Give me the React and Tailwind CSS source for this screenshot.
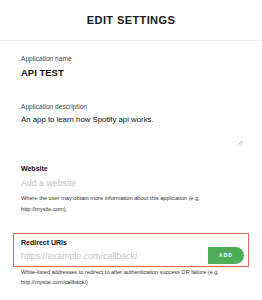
import React from 'react';

const font = { fontFamily: '"Liberation Sans", Arial, sans-serif' };

const App = () => {
    return (
        <div className="w-[262px] h-[300px] bg-white overflow-hidden text-[#222]" style={font}>
            <div className="h-[41px] flex items-center justify-center border-b border-[#ececec]">
                <h1 className="text-[11px] font-bold tracking-[0.4px] text-[#1a1a1a]">EDIT SETTINGS</h1>
            </div>

            <div className="px-[21px]">
                <p className="mt-[13px] text-[6.6px] leading-[10px] text-[#444]">Application name</p>
                <p className="mt-[3px] text-[9.5px] leading-[12px] font-bold text-[#111]">API TEST</p>

                <p className="mt-[23px] text-[6.6px] leading-[10px] text-[#444]">Application description</p>
                <div className="relative mt-[2px] h-[34px]">
                    <p className="text-[7.8px] leading-[12px] text-[#111]">An app to learn how Spotify api works.</p>
                    <svg className="absolute right-[-2px] top-[26px]" width="5" height="5" viewBox="0 0 5 5">
                        <path d="M4.5 0.5 L0.5 4.5 M4.5 2.5 L2.5 4.5" stroke="#999" strokeWidth="0.7" />
                    </svg>
                </div>

                <p className="mt-[16px] text-[7px] leading-[10px] font-bold text-[#111]">Website</p>
                <p className="mt-[2px] text-[8.8px] leading-[14px] text-[#c4c4c4]">Add a website</p>
                <p className="mt-[3px] text-[5.65px] leading-[11px] text-[#333]">
                    Where the user may obtain more information about this application (e.g.
                    <br />
                    http://mysite.com).
                </p>
            </div>

            <div className="mx-[13px] mt-[18px] border border-[#dd6a55] h-[34px] flex">
                <div className="flex-1 pl-[7px] pt-[4px]">
                    <p className="text-[7px] leading-[10px] font-bold text-[#111]">Redirect URIs</p>
                    <p className="mt-[2px] text-[8.9px] leading-[12px] text-[#c4c4c4]">https://example.com/callback/</p>
                </div>
                <div className="flex items-end pb-[2px] pr-[4px]">
                    <button className="w-[36px] h-[17px] bg-[#4caf57] rounded-r-full text-white text-[5px] font-bold tracking-[1px] flex items-center justify-center">
                        ADD
                    </button>
                </div>
            </div>

            <p className="mx-[21px] mt-[0px] text-[5.55px] leading-[10px] text-[#333]">
                White-listed addresses to redirect to after authentication success OR failure (e.g.
                <br />
                http://mysite.com/callback/)
            </p>
        </div>
    );
};

export default App;
